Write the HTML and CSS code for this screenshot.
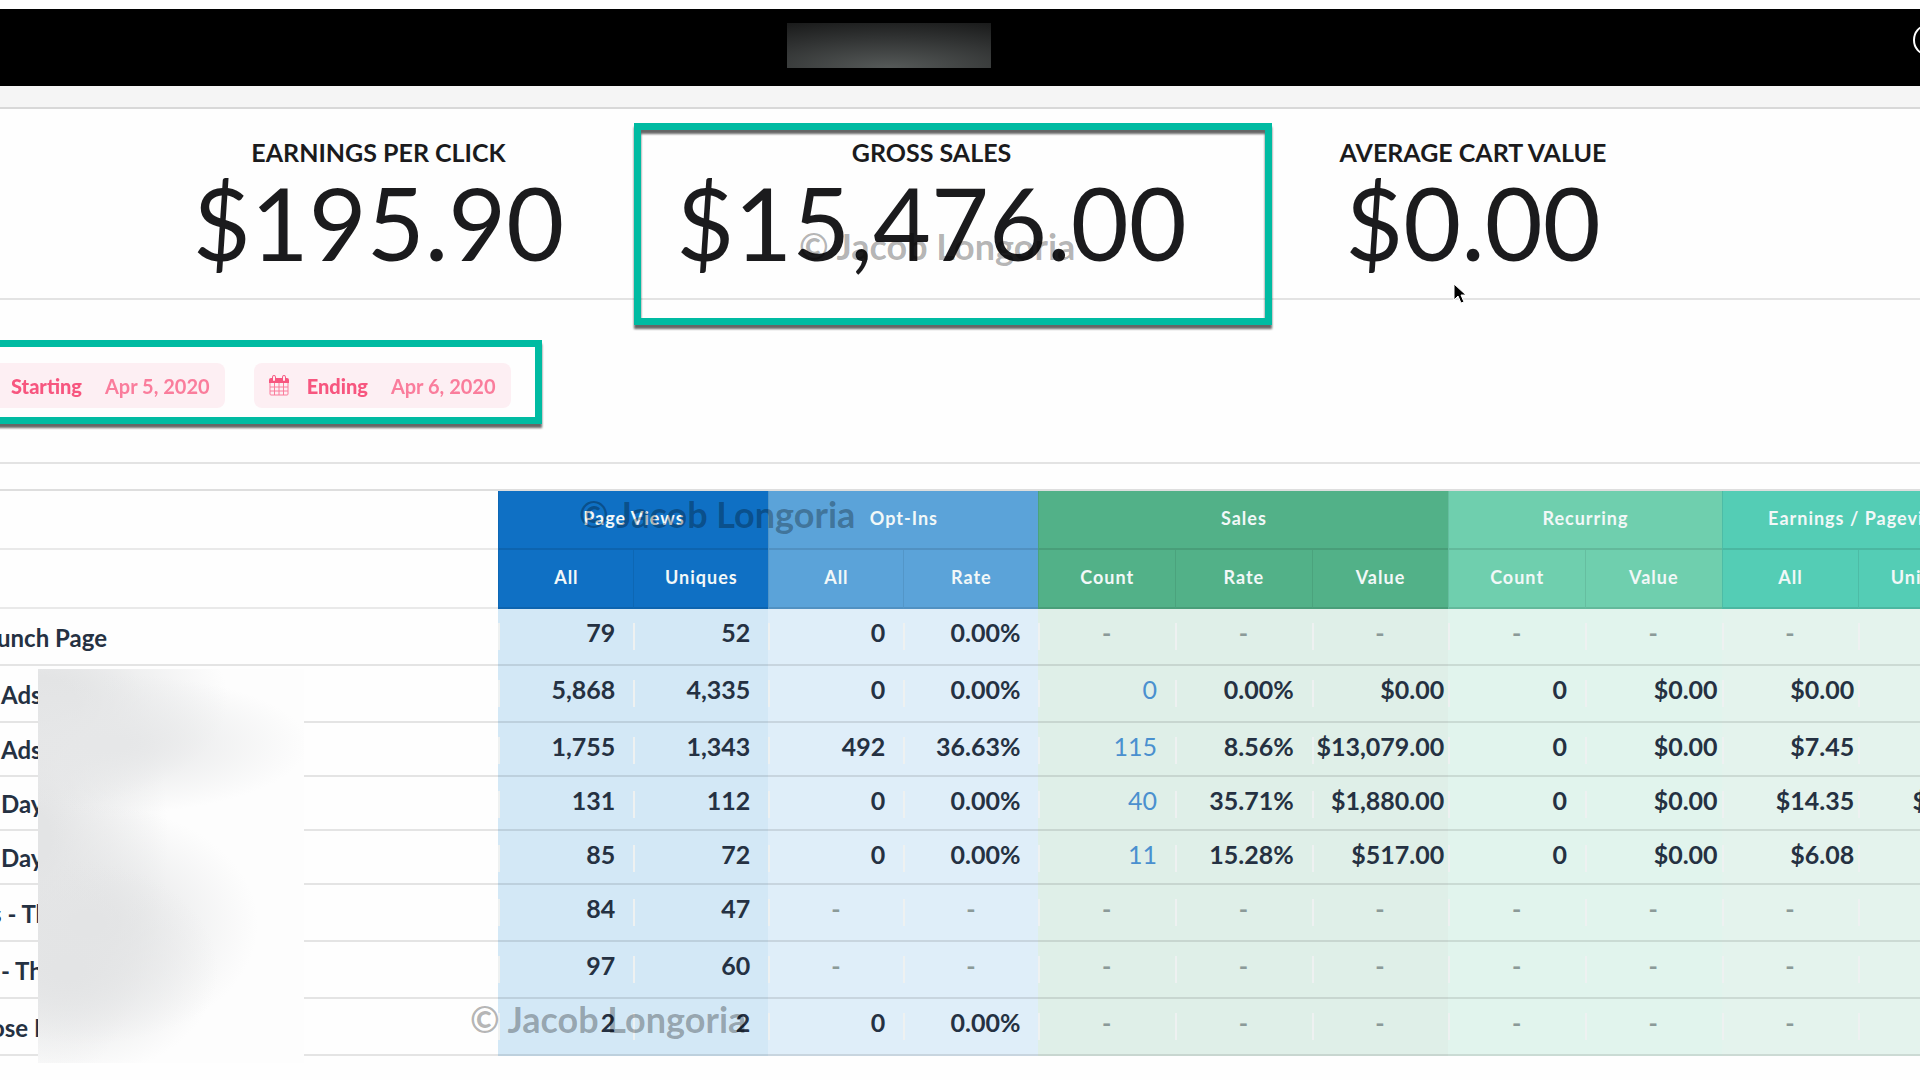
FILE: index.html
```html
<!DOCTYPE html>
<html lang="en">
<head>
    <meta charset="utf-8">
    <meta name="viewport" content="width=device-width, initial-scale=1.0">
    <title>Funnel Stats</title>
    <link rel="stylesheet" href="styles.css">
</head>
<body>
    <header class="topbar">
        <div class="brand"></div>
        <svg class="help-icon" viewBox="0 0 28 34" aria-hidden="true">
            <ellipse cx="14" cy="17" rx="12" ry="14" fill="none" stroke="#fff" stroke-width="2"/>
        </svg>
    </header>

    <section class="stats">
        <div class="stat">
            <h2>EARNINGS PER CLICK</h2>
            <p>$195.90</p>
        </div>
        <div class="stat">
            <h2>GROSS SALES</h2>
            <p>$15,476.00</p>
            <div class="marker"></div>
        </div>
        <div class="stat">
            <h2>AVERAGE CART VALUE</h2>
            <p>$0.00</p>
        </div>
        <span class="watermark watermark-stats">© Jacob Longoria</span>
        <svg class="cursor" viewBox="0 0 14 22" aria-hidden="true">
            <path d="M1 1v16l4-4 3 7 3-1-3-7h5z" fill="#000" stroke="#fff"/>
        </svg>
    </section>

    <section class="filters">
        <div class="date-range">
            <button class="date" type="button">
                <svg viewBox="0 0 20 21" aria-hidden="true">
                    <path class="cal-grid" d="M1 8v11q0 1 1 1h16q1 0 1-1V8M1 12h18M1 16h18M5.500 8v12M10 8v12M14.500 8v12"/>
                    <path class="cal-top" d="M0 8V5q0-2 2-2h16q2 0 2 2v3z"/>
                    <path class="cal-ring" d="M5 1v4M15 1v4"/>
                </svg>
                <b>Starting</b>
                <span>Apr 5, 2020</span>
            </button>
            <button class="date" type="button">
                <svg viewBox="0 0 20 21" aria-hidden="true">
                    <path class="cal-grid" d="M1 8v11q0 1 1 1h16q1 0 1-1V8M1 12h18M1 16h18M5.500 8v12M10 8v12M14.500 8v12"/>
                    <path class="cal-top" d="M0 8V5q0-2 2-2h1a2 3 0 0 1 4 0h6a2 3 0 0 1 4 0h1q2 0 2 2v3z"/>
                    <path class="cal-ring" d="M5 2v3M15 2v3"/>
                </svg>
                <b>Ending</b>
                <span>Apr 6, 2020</span>
            </button>
        </div>
    </section>

    <section class="report">
        <table>
            <colgroup>
                <col>
                <col class="col-sm" span="4">
                <col class="col-md" span="7">
            </colgroup>
            <thead>
                <tr>
                    <td></td>
                    <th class="views" colspan="2">Page Views</th>
                    <th class="optins" colspan="2">Opt-Ins</th>
                    <th class="sales" colspan="3">Sales</th>
                    <th class="recurring" colspan="2">Recurring</th>
                    <th class="earnings" colspan="2">Earnings / Pageview</th>
                </tr>
                <tr>
                    <td></td>
                    <th class="views">All</th>
                    <th class="views">Uniques</th>
                    <th class="optins">All</th>
                    <th class="optins">Rate</th>
                    <th class="sales">Count</th>
                    <th class="sales">Rate</th>
                    <th class="sales">Value</th>
                    <th class="recurring">Count</th>
                    <th class="recurring">Value</th>
                    <th class="earnings">All</th>
                    <th class="earnings">Uniques</th>
                </tr>
            </thead>
            <tbody>
                <tr>
                    <th class="name cut">unch Page</th>
                    <td class="views">79</td>
                    <td class="views">52</td>
                    <td class="optins">0</td>
                    <td class="optins">0.00%</td>
                    <td class="sales none">-</td>
                    <td class="sales none">-</td>
                    <td class="sales none">-</td>
                    <td class="recurring none">-</td>
                    <td class="recurring none">-</td>
                    <td class="earnings none">-</td>
                    <td class="earnings none">-</td>
                </tr>
                <tr>
                    <th class="name">Ads</th>
                    <td class="views">5,868</td>
                    <td class="views">4,335</td>
                    <td class="optins">0</td>
                    <td class="optins">0.00%</td>
                    <td class="sales"><a href="#">0</a></td>
                    <td class="sales">0.00%</td>
                    <td class="sales money">$0.00</td>
                    <td class="recurring">0</td>
                    <td class="recurring money">$0.00</td>
                    <td class="earnings money">$0.00</td>
                    <td class="earnings money">$0.00</td>
                </tr>
                <tr class="short">
                    <th class="name">Ads</th>
                    <td class="views">1,755</td>
                    <td class="views">1,343</td>
                    <td class="optins">492</td>
                    <td class="optins">36.63%</td>
                    <td class="sales"><a href="#">115</a></td>
                    <td class="sales">8.56%</td>
                    <td class="sales money">$13,079.00</td>
                    <td class="recurring">0</td>
                    <td class="recurring money">$0.00</td>
                    <td class="earnings money">$7.45</td>
                    <td class="earnings money">$9.74</td>
                </tr>
                <tr class="short">
                    <th class="name">Day</th>
                    <td class="views">131</td>
                    <td class="views">112</td>
                    <td class="optins">0</td>
                    <td class="optins">0.00%</td>
                    <td class="sales"><a href="#">40</a></td>
                    <td class="sales">35.71%</td>
                    <td class="sales money">$1,880.00</td>
                    <td class="recurring">0</td>
                    <td class="recurring money">$0.00</td>
                    <td class="earnings money">$14.35</td>
                    <td class="earnings money">$16.79</td>
                </tr>
                <tr class="short">
                    <th class="name">Day</th>
                    <td class="views">85</td>
                    <td class="views">72</td>
                    <td class="optins">0</td>
                    <td class="optins">0.00%</td>
                    <td class="sales"><a href="#">11</a></td>
                    <td class="sales">15.28%</td>
                    <td class="sales money">$517.00</td>
                    <td class="recurring">0</td>
                    <td class="recurring money">$0.00</td>
                    <td class="earnings money">$6.08</td>
                    <td class="earnings money">$7.18</td>
                </tr>
                <tr>
                    <th class="name cut-more">s - Th</th>
                    <td class="views">84</td>
                    <td class="views">47</td>
                    <td class="optins none">-</td>
                    <td class="optins none">-</td>
                    <td class="sales none">-</td>
                    <td class="sales none">-</td>
                    <td class="sales none">-</td>
                    <td class="recurring none">-</td>
                    <td class="recurring none">-</td>
                    <td class="earnings none">-</td>
                    <td class="earnings none">-</td>
                </tr>
                <tr>
                    <th class="name">- Th</th>
                    <td class="views">97</td>
                    <td class="views">60</td>
                    <td class="optins none">-</td>
                    <td class="optins none">-</td>
                    <td class="sales none">-</td>
                    <td class="sales none">-</td>
                    <td class="sales none">-</td>
                    <td class="recurring none">-</td>
                    <td class="recurring none">-</td>
                    <td class="earnings none">-</td>
                    <td class="earnings none">-</td>
                </tr>
                <tr>
                    <th class="name cut-more">ose P</th>
                    <td class="views">2</td>
                    <td class="views">2</td>
                    <td class="optins">0</td>
                    <td class="optins">0.00%</td>
                    <td class="sales none">-</td>
                    <td class="sales none">-</td>
                    <td class="sales none">-</td>
                    <td class="recurring none">-</td>
                    <td class="recurring none">-</td>
                    <td class="earnings none">-</td>
                    <td class="earnings none">-</td>
                </tr>
            </tbody>
        </table>
        <div class="redacted"></div>
        <span class="watermark watermark-head">© Jacob Longoria</span>
        <span class="watermark watermark-foot">© Jacob Longoria</span>
    </section>
</body>
</html>
```

FILE: styles.css
```css
:root {
    --teal: #00bba2;
    --pink: #f7567f;
    --pink-soft: #fa7d9c;
    --ink: #1b1b1d;
    --navy: #253142;
    --line: #dedede;
}

* {
    margin: 0;
    padding: 0;
    box-sizing: border-box;
}

body {
    font-family: Lato, "Open Sans", sans-serif;
    background: #fefefe;
    color: var(--ink);
    overflow: hidden;
}

/* Top bar */
.topbar {
    display: flex;
    align-items: flex-start;
    height: 77px;
    margin-top: 9px;
    padding-top: 14px;
    background: #000;
    overflow: hidden;
}

.brand {
    width: 204px;
    height: 45px;
    margin-left: 41%;
    background: radial-gradient(ellipse 280px 62px at 50% 100%, #565a59 0%, #303232 50%, #0c0c0c 100%);
}

.help-icon {
    width: 28px;
    height: 34px;
    margin-left: auto;
    margin-right: -20px;
    flex: none;
}

/* Headline numbers */
.stats {
    position: relative;
    display: grid;
    grid-template-columns: 553fr 553fr 530fr;
    padding: 27px 182px 22px 102px;
    border-top: 2px solid #d8d8d8;
    border-bottom: 2px solid #e3e3e3;
    margin-top: 21px;
    box-shadow: 0 -21px 0 #f5f5f5;
}

.stat {
    position: relative;
    text-align: center;
}

.stat h2 {
    font-size: 25px;
    line-height: 32px;
    font-weight: 700;
}

.stat p {
    font-size: 100px;
    line-height: 108px;
}

.marker {
    position: absolute;
    top: -13px;
    left: -21px;
    right: -64px;
    height: 202px;
    border: 7px solid var(--teal);
    filter: drop-shadow(0 4px 1px rgba(0, 0, 0, 0.6));
}

.cursor {
    position: absolute;
    left: 1453px;
    top: 174px;
    width: 14px;
    height: 22px;
}

/* Date filters */
.filters {
    padding: 40px 0 38px;
    border-bottom: 2px solid #e3e3e3;
}

.date-range {
    display: flex;
    gap: 29px;
    width: fit-content;
    margin-left: -70px;
    padding: 16px 24px 9px 21px;
    border: 7px solid var(--teal);
    filter: drop-shadow(0 4px 1px rgba(0, 0, 0, 0.6));
    background: #fefefe;
}

.date {
    display: flex;
    align-items: center;
    height: 45px;
    padding: 0 15px 0 15px;
    border: none;
    border-radius: 8px;
    background: #fdeff3;
    color: var(--pink-soft);
    font: 700 20px/26px Lato, sans-serif;
}

.date svg {
    width: 20px;
    height: 21px;
    margin-right: 18px;
    overflow: visible;
}

.date b {
    margin-right: 23px;
    color: var(--pink);
}

.cal-grid {
    fill: none;
    stroke: var(--pink-soft);
}

.cal-top {
    fill: var(--pink);
}

.cal-ring {
    fill: none;
    stroke: #fdeff3;
    stroke-width: 2;
    stroke-linecap: round;
}

/* Report table */
.report {
    position: relative;
    margin-top: 25px;
    padding-bottom: 12px;
    overflow: hidden;
}

table {
    width: 103.9%;
    table-layout: fixed;
    border-collapse: separate;
    border-spacing: 0;
    border-top: 2px solid var(--line);
}

.col-sm {
    width: 135px;
}

.col-md {
    width: 6.85%;
}

thead td {
    height: 59px;
    border-bottom: 2px solid #e9e9e9;
}

thead th {
    height: 59px;
    padding-bottom: 3px;
    border-bottom: 2px solid rgba(0, 0, 0, 0.1);
    border-left: 1px solid rgba(0, 0, 0, 0.08);
    color: #f2f8f8;
    font-size: 18px;
    letter-spacing: 1px;
}

thead .views { background: #0f70c4; }
thead .optins { background: #5ba3d9; }
thead .sales { background: #52b188; }
thead .recurring { background: #6fcfae; }
thead .earnings { background: #54cdb5; }

tbody th,
tbody td {
    height: 57px;
    border-bottom: 2px solid rgba(0, 0, 0, 0.1);
    color: var(--navy);
    font-size: 25px;
    line-height: 28px;
    font-weight: 700;
    white-space: nowrap;
}

tbody .short th,
tbody .short td {
    height: 54px;
}

tbody td {
    padding: 9px 18px 0 0;
    text-align: right;
    vertical-align: top;
    background-image: linear-gradient(#eef1f1, #eef1f1);
    background-repeat: no-repeat;
    background-position: left 14px;
    background-size: 2px 27px;
}

tbody .money {
    padding-right: 4px;
}

tbody .none {
    padding-right: 0;
    text-align: center;
    color: #8b9a98;
}

tbody .name {
    padding-left: 1px;
    padding-top: 2px;
    font-size: 24px;
    text-align: left;
}

tbody .cut {
    text-indent: -4px;
}

tbody .cut-more {
    text-indent: -10px;
}

tbody a {
    color: #4a90cf;
    font-weight: 400;
    text-decoration: none;
}

tbody .views { background-color: #d3e8f6; }
tbody .optins { background-color: #dfeef9; }
tbody .sales { background-color: #dfefe8; }
tbody .recurring { background-color: #e1f4ed; }
tbody .earnings { background-color: #e4f3ed; }

/* Blurred-out funnel names */
.redacted {
    position: absolute;
    top: 180px;
    left: 38px;
    width: 266px;
    height: 394px;
    background:
        radial-gradient(ellipse 150px 110px at 30px 300px, #e3e4e5 10%, rgba(228, 229, 230, 0) 100%),
        radial-gradient(ellipse 170px 120px at 50px 255px, #e3e4e5 10%, rgba(228, 229, 230, 0) 100%),
        radial-gradient(ellipse 200px 70px at 70px 75px, #e6e7e8 10%, rgba(229, 230, 231, 0) 100%),
        radial-gradient(ellipse 190px 110px at 0 30px, #e3e4e5 20%, rgba(228, 229, 230, 0) 100%),
        radial-gradient(ellipse 130px 250px at 0 170px, #e3e4e5 10%, rgba(228, 229, 230, 0) 100%),
        #fdfdfd;
}

.watermark {
    position: absolute;
    color: rgba(0, 0, 0, 0.3);
    font-size: 36px;
    line-height: 44px;
    font-weight: 700;
    white-space: nowrap;
    pointer-events: none;
}

.watermark-stats {
    top: 115px;
    left: 799px;
}

.watermark-head {
    top: 3px;
    left: 579px;
}

.watermark-foot {
    top: 508px;
    left: 470px;
}
```
